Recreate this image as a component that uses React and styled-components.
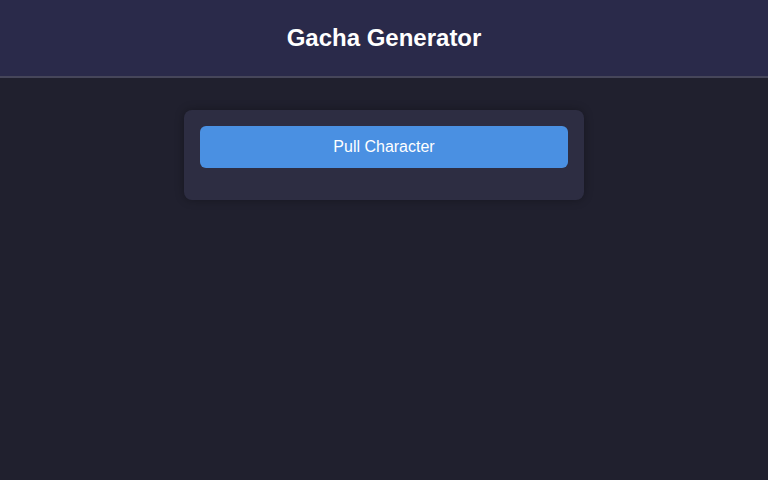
import React from "react";
import styled, { createGlobalStyle } from "styled-components";

const GlobalStyle = createGlobalStyle`
  html, body {
    margin: 0;
    padding: 0;
    background: #20202e;
    font-family: "Liberation Sans", Arial, sans-serif;
    color: #ffffff;
  }
  * { box-sizing: border-box; }
`;

const Page = styled.div`
  min-height: 100vh;
  background: #20202e;
`;

const Header = styled.header`
  background: #2a2a4a;
  border-bottom: 2px solid #46465a;
  padding: 24px 16px;
  text-align: center;
`;

const Title = styled.h1`
  margin: 0;
  font-size: 24px;
  line-height: 28px;
  font-weight: 700;
  color: #ffffff;
`;

const Main = styled.main`
  display: flex;
  justify-content: center;
  padding-top: 32px;
`;

const Card = styled.section`
  width: 400px;
  background: #2d2d42;
  border-radius: 8px;
  padding: 16px 16px 32px;
  box-shadow: 0 0 10px rgba(0, 0, 0, 0.3);
`;

const PullButton = styled.button`
  display: block;
  width: 100%;
  height: 42px;
  border: none;
  border-radius: 6px;
  background: #4a90e2;
  color: #ffffff;
  font-family: "Liberation Sans", Arial, sans-serif;
  font-size: 16px;
  cursor: pointer;
`;

export default function App() {
  return (
    <Page>
      <GlobalStyle />
      <Header>
        <Title>Gacha Generator</Title>
      </Header>
      <Main>
        <Card>
          <PullButton>Pull Character</PullButton>
        </Card>
      </Main>
    </Page>
  );
}
